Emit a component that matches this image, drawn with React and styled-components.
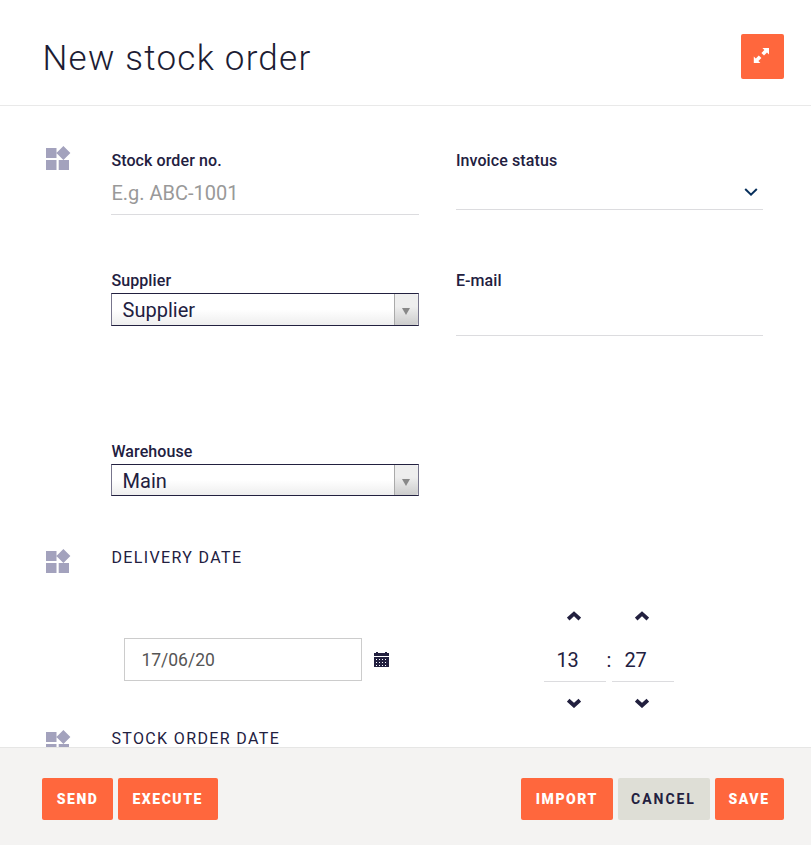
import React from "react";
import styled, { createGlobalStyle } from "styled-components";

const GlobalStyle = createGlobalStyle`
  *, *::before, *::after { box-sizing: border-box; }
  body {
    margin: 0;
    background: #fff;
    color: #22203f;
    font-family: Roboto, "Liberation Sans", sans-serif;
  }
  button, input { font-family: inherit; }
`;

const Dialog = styled.div`
  display: flex;
  flex-direction: column;
  height: 845px;
  width: 811px;
  overflow: hidden;
`;

const Header = styled.header`
  display: flex;
  flex: none;
  justify-content: space-between;
  align-items: flex-start;
  height: 106px;
  padding: 34px 27.5px 0 42.5px;
  border-bottom: 1px solid #e9e9e9;
`;

const Title = styled.h1`
  margin: 0;
  font-size: 35px;
  line-height: 50px;
  font-weight: 300;
  letter-spacing: 1.24px;
  color: #1d1c33;
`;

const Button = styled.button`
  height: 42px;
  width: ${(p) => p.$width}px;
  padding: 0;
  border: 0;
  border-radius: 2px;
  background: ${(p) => (p.$muted ? "#deded6" : "#ff673d")};
  color: ${(p) => (p.$muted ? "#22203f" : "#fff")};
  font-size: 14px;
  line-height: 42px;
  font-weight: ${(p) => (p.$muted ? 700 : 900)};
  letter-spacing: ${(p) => (p.$muted ? 1.95 : 1.55)}px;
  text-align: center;
  white-space: nowrap;
`;

const ExpandButton = styled(Button)`
  display: flex;
  align-items: center;
  justify-content: center;
  height: 45px;
  padding: 0 1px 2px 0;
`;

const Body = styled.main`
  flex: none;
  height: 641px;
  overflow: hidden;
`;

const Section = styled.section`
  display: grid;
  grid-template-columns: 65.4px 307px 307px;
  column-gap: 0;
  padding-left: 46px;
  height: ${(p) => p.$height}px;
  padding-top: ${(p) => p.$top || 0}px;
`;

const SectionIcon = styled.svg`
  display: block;
  width: 25px;
  height: 25px;
  margin-top: ${(p) => p.$offset}px;
  fill: #a3a2bd;
`;

const Fields = styled.div`
  display: grid;
  grid-column: 2 / 4;
  grid-template-columns: 307.4px 307px;
  grid-template-rows: 120px 171px 60px;
  column-gap: 37.1px;
  align-content: start;
`;

const Label = styled.label`
  display: block;
  height: ${(p) => p.$height || 20}px;
  font-size: 16px;
  line-height: 22px;
  font-weight: 500;
  letter-spacing: 0.1px;
`;

const TextInput = styled.input`
  display: block;
  width: 100%;
  height: ${(p) => p.$height}px;
  padding: 2px 0 0;
  border: 0;
  border-bottom: 1px solid #dcdcdf;
  outline: 0;
  background: transparent;
  color: #22203f;
  font-size: 20px;
  &::placeholder { color: #999; opacity: 1; }
`;

const StatusSelect = styled.div`
  display: flex;
  align-items: center;
  justify-content: flex-end;
  height: 40px;
  padding: 4px 5px 0 0;
  border-bottom: 1px solid #dcdcdf;
`;

const SelectBox = styled.div`
  display: flex;
  height: ${(p) => p.$height}px;
  border: 1px solid #22203f;
  border-left-color: #77758c;
  border-right-color: #77758c;
  background: linear-gradient(#fff 50%, #eee 100%);
  font-size: 20px;
  line-height: 32px;
`;

const SelectValue = styled.span`
  flex: 1;
  padding-left: 10.2px;
`;

const SelectArrow = styled.span`
  display: flex;
  align-items: center;
  justify-content: center;
  width: 24px;
  padding-top: 4px;
  border-left: 1px solid #aaa;
  border-radius: 0 3px 3px 0;
  background: linear-gradient(#eee 40%, #ccc 100%);
`;

const Heading = styled.h2`
  grid-column: 2 / 4;
  margin: 0;
  height: 20px;
  font-size: 16px;
  line-height: 22px;
  font-weight: 400;
  letter-spacing: 1.36px;
`;

const SectionContent = styled.div`
  grid-column: 2 / 4;
`;

const DateTimeRow = styled.div`
  display: flex;
  align-items: flex-start;
  padding: 40px 0 0 13px;
`;

const DateInput = styled.input`
  width: 237.4px;
  height: 43px;
  margin-top: 31px;
  padding: 0 16px;
  border: 1px solid #ccc;
  outline: 0;
  color: #555;
  font-size: 17.5px;
`;

const CalendarIcon = styled.svg`
  width: 15px;
  height: 15px;
  margin: 45px 155px 0 12.1px;
  fill: #22203f;
`;

const Spinner = styled.div`
  display: flex;
  flex-direction: column;
  align-items: center;
  width: 62px;
`;

const Arrow = styled.svg`
  display: block;
  width: 14px;
  height: 10px;
  margin: ${(p) => p.$top}px 1px 0 0;
  fill: none;
  stroke: #22203f;
  stroke-width: 3.8;
`;

const SpinnerValue = styled.input`
  width: 62px;
  height: 42px;
  margin-top: 19px;
  padding: 0 0 1px 12.5px;
  border: 0;
  border-bottom: 1px solid #dcdcdf;
  outline: 0;
  color: #22203f;
  font-size: 20px;
`;

const Colon = styled.span`
  width: 6px;
  margin-top: 41px;
  font-size: 20px;
  line-height: 24px;
  text-align: center;
`;

const Footer = styled.footer`
  display: flex;
  flex: none;
  justify-content: space-between;
  height: 98px;
  padding: 30px 27.5px 0 42.4px;
  border-top: 1px solid #e6e6e5;
  background: #f4f3f2;
`;

const ButtonGroup = styled.div`
  display: flex;
  gap: 5px;
`;

function Widgets({ offset }) {
  return (
    <SectionIcon viewBox="0 0 25 25" $offset={offset}>
      <path d="M0 2h10.5v10H0zM0 14h10.5v10H0zM12.7 14H23v10H12.7zM17.4 0l7 7-7 7-7-7z" />
    </SectionIcon>
  );
}

function ComboBox({ value, height }) {
  return (
    <SelectBox $height={height}>
      <SelectValue>{value}</SelectValue>
      <SelectArrow>
        <svg width="8" height="7" viewBox="0 0 8 7">
          <path d="M0 0h8L4 7z" fill="#888" />
        </svg>
      </SelectArrow>
    </SelectBox>
  );
}

function NumberSpinner({ value }) {
  return (
    <Spinner>
      <Arrow viewBox="0 0 14 10" $top={4}>
        <path d="M1.2 8L7 2.7 12.8 8" />
      </Arrow>
      <SpinnerValue defaultValue={value} />
      <Arrow viewBox="0 0 14 10" $top={16}>
        <path d="M1.2 2.2L7 7.5l5.8-5.3" />
      </Arrow>
    </Spinner>
  );
}

export default function App() {
  return (
    <>
      <GlobalStyle />
      <Dialog>
        <Header>
          <Title>New stock order</Title>
          <ExpandButton $width={43} aria-label="Expand">
            <svg width="17" height="17" viewBox="0 0 17 17" fill="#fff">
              <path d="M9.4 1H16v6.6l-2-2-3 2.9-2.6-2.6L11.4 3zM5.8 8.5l2.6 2.6-3 2.9 2 2H.8V9.4l2 2z" />
            </svg>
          </ExpandButton>
        </Header>

        <Body>
          <Section $height={441} $top={44}>
            <Widgets offset={-4} />
            <Fields>
              <div>
                <Label>Stock order no.</Label>
                <TextInput placeholder="E.g. ABC-1001" $height={45} />
              </div>
              <div>
                <Label>Invoice status</Label>
                <StatusSelect>
                  <svg width="14" height="10" viewBox="0 0 14 10" fill="none">
                    <path d="M1.2 2L7 7.7 12.8 2" stroke="#08305c" strokeWidth="2" />
                  </svg>
                </StatusSelect>
              </div>
              <div>
                <Label $height={23}>Supplier</Label>
                <ComboBox value="Supplier" height={33} />
              </div>
              <div>
                <Label>E-mail</Label>
                <TextInput $height={46} />
              </div>
              <div>
                <Label $height={23}>Warehouse</Label>
                <ComboBox value="Main" height={32} />
              </div>
            </Fields>
          </Section>

          <Section $height={181}>
            <Widgets offset={2} />
            <SectionContent>
              <Heading>DELIVERY DATE</Heading>
              <DateTimeRow>
                <DateInput defaultValue="17/06/20" />
                <CalendarIcon viewBox="0 0 15 15">
                  <path d="M0 1h2V0h2v1h7V0h2v1h2v3H0z" />
                  <path
                    fillRule="evenodd"
                    d="M0 5h15v10H0zM2 7v1h1V7zm3 0v1h1V7zm3 0v1h1V7zm3 0v1h1V7zM2 10v1h1v-1zm3 0v1h1v-1zm3 0v1h1v-1zm3 0v1h1v-1zM2 13v1h1v-1zm3 0v1h1v-1zm3 0v1h1v-1zm3 0v1h1v-1z"
                  />
                </CalendarIcon>
                <NumberSpinner value="13" />
                <Colon>:</Colon>
                <NumberSpinner value="27" />
              </DateTimeRow>
            </SectionContent>
          </Section>

          <Section $height={60}>
            <Widgets offset={2} />
            <Heading>STOCK ORDER DATE</Heading>
          </Section>
        </Body>

        <Footer>
          <ButtonGroup>
            <Button $width={70.3}>SEND</Button>
            <Button $width={100}>EXECUTE</Button>
          </ButtonGroup>
          <ButtonGroup>
            <Button $width={91.2}>IMPORT</Button>
            <Button $width={92} $muted>CANCEL</Button>
            <Button $width={69}>SAVE</Button>
          </ButtonGroup>
        </Footer>
      </Dialog>
    </>
  );
}
